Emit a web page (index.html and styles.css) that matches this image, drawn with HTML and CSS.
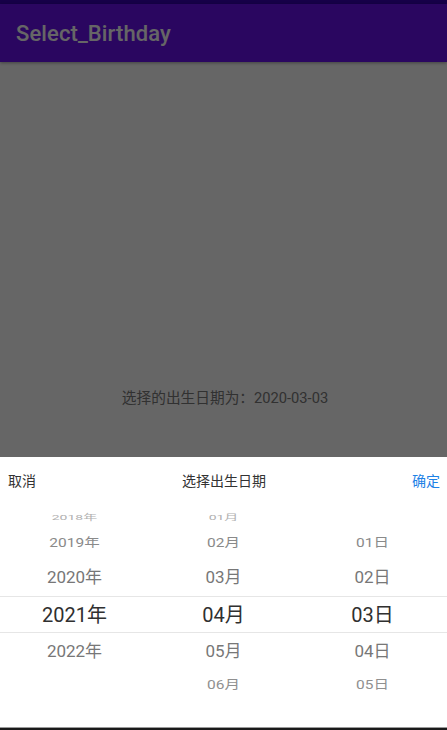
FILE: index.html
```html
<!DOCTYPE html>
<html lang="zh-CN">
<head>
<meta charset="utf-8">
<title>Select_Birthday</title>
<link rel="stylesheet" href="styles.css">
</head>
<body>
<div class="screen">
  <div class="statusbar"></div>
  <header class="toolbar"><span class="title">Select_Birthday</span></header>
  <main class="content">
    <p class="result">选择的出生日期为：2020-03-03</p>
  </main>
  <div class="scrim"></div>
  <section class="sheet">
    <div class="sheet-head">
      <span class="btn cancel">取消</span>
      <span class="sheet-title">选择出生日期</span>
      <span class="btn ok">确定</span>
    </div>
    <div class="wheel">
      <div class="row r-3"><span class="cell"><span class="t">2018年</span></span><span class="cell"><span class="t">01月</span></span><span class="cell"></span></div>
      <div class="row r-2"><span class="cell"><span class="t">2019年</span></span><span class="cell"><span class="t">02月</span></span><span class="cell"><span class="t">01日</span></span></div>
      <div class="row r-1"><span class="cell"><span class="t">2020年</span></span><span class="cell"><span class="t">03月</span></span><span class="cell"><span class="t">02日</span></span></div>
      <div class="row r0"><span class="cell"><span class="t">2021年</span></span><span class="cell"><span class="t">04月</span></span><span class="cell"><span class="t">03日</span></span></div>
      <div class="row r1"><span class="cell"><span class="t">2022年</span></span><span class="cell"><span class="t">05月</span></span><span class="cell"><span class="t">04日</span></span></div>
      <div class="row r2"><span class="cell"></span><span class="cell"><span class="t">06月</span></span><span class="cell"><span class="t">05日</span></span></div>
    </div>
  </section>
  <div class="navbar"></div>
</div>
</body>
</html>
```

FILE: styles.css
```css
html, body {
  margin: 0;
  padding: 0;
}
body {
  font-family: Roboto, "Noto Sans CJK SC", sans-serif;
  background: #ffffff;
}
.screen {
  position: relative;
  width: 447px;
  height: 730px;
  overflow: hidden;
  display: flex;
  flex-direction: column;
  background: #ffffff;
}
.statusbar {
  height: 4px;
  background: #3700b3;
  flex: none;
}
.toolbar {
  height: 58px;
  flex: none;
  background: #6a10f0;
  display: flex;
  align-items: center;
  padding-left: 16px;
  box-shadow: 0 1px 3px rgba(0,0,0,0.35);
  position: relative;
  z-index: 1;
}
.title {
  color: #ffffff;
  font-family: Roboto, sans-serif;
  font-weight: 500;
  font-size: 22px;
  letter-spacing: 0.1px;
}
.content {
  flex: 1;
  display: flex;
  align-items: center;
  justify-content: center;
  background: #ffffff;
}
.result {
  margin: 0 0 0 3px;
  font-size: 14.7px;
  color: #7a7a7a;
  font-family: Roboto, "Noto Sans CJK SC", sans-serif;
}
.scrim {
  position: absolute;
  inset: 0;
  background: rgba(0,0,0,0.6);
  z-index: 2;
}
.sheet {
  position: absolute;
  left: 0;
  right: 0;
  bottom: 3px;
  height: 270px;
  background: #ffffff;
  z-index: 3;
  display: flex;
  flex-direction: column;
  font-family: Roboto, "Noto Sans CJK SC", sans-serif;
}
.sheet-head {
  height: 46px;
  display: flex;
  align-items: center;
  justify-content: space-between;
  padding: 0 7px 0 8px;
  font-size: 14px;
  color: #333333;
}
.sheet-head .btn,
.sheet-head .sheet-title {
  flex: 1;
}
.sheet-title {
  text-align: center;
}
.ok {
  text-align: right;
  color: #1e82e6;
}
.wheel {
  display: flex;
  flex-direction: column;
}
.row {
  display: grid;
  grid-template-columns: 149px 149px 149px;
  align-items: center;
  line-height: 1;
}
.cell {
  text-align: center;
}
.t {
  display: inline-block;
}
.r-3 { height: 27px; font-size: 14px; color: #b0b0b0; }
.r-3 .t { transform: scaleY(0.55); }
.r-2 { height: 28px; font-size: 15.5px; color: #8a8a8a; }
.r-2 .t { transform: scaleY(0.8); }
.r-1 { height: 38px; font-size: 17px; color: #777777; }
.r0 {
  height: 37px;
  font-size: 20px;
  color: #303030;
  border-top: 1px solid #e6e6e6;
  border-bottom: 1px solid #e6e6e6;
  box-sizing: border-box;
}
.r1 { height: 36px; font-size: 17px; color: #777777; }
.r2 { height: 34px; font-size: 15.5px; color: #909090; }
.r2 .t { transform: scaleY(0.78); }
.navbar {
  position: absolute;
  left: 0;
  right: 0;
  bottom: 0;
  height: 3px;
  background: #1a1a1a;
  border-top: 1px solid #9a9a9a;
  box-sizing: border-box;
  z-index: 3;
}
```
